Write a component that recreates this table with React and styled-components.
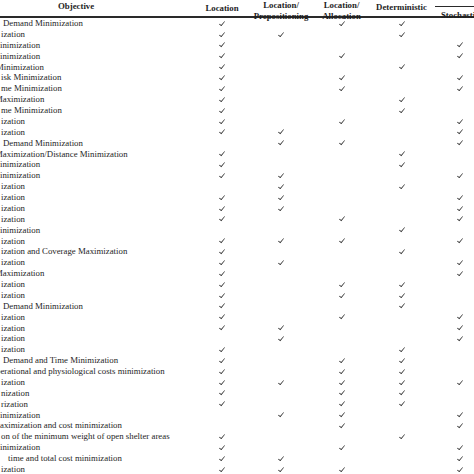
import { Fragment } from "react";
import styled, { createGlobalStyle } from "styled-components";

const GlobalStyle = createGlobalStyle`
  html, body {
    margin: 0;
    padding: 0;
    background: #fff;
  }
  body {
    font-family: "Liberation Serif", "Times New Roman", serif;
    color: #1e1e1e;
  }
`;

const Frame = styled.div`
  width: 474px;
  height: 474px;
  overflow: hidden;
  background: #fff;
`;

const Grid = styled.div`
  display: grid;
  grid-template-columns: 193px 58px 60px 61px 59px 58px;
  grid-template-rows: 18px;
  grid-auto-rows: 10.88px;
  width: 489px;
  font-size: 8.8px;
  line-height: 10.88px;
`;

const HeadCell = styled.div`
  box-sizing: border-box;
  height: 18px;
  border-bottom: 2px solid #2a2a2a;
  font-weight: bold;
  text-align: ${({ $left }) => ($left ? "left" : "center")};
  padding-top: ${({ $top }) => $top}px;
  padding-left: ${({ $indent }) => $indent || 0}px;
  line-height: 10.5px;
  white-space: nowrap;
  overflow: visible;
`;

const GroupRule = styled.div`
  margin: 6px 0 3px 4px;
  border-top: 1px solid #2a2a2a;
`;

const ObjCell = styled.div`
  white-space: nowrap;
  overflow: hidden;
  text-indent: ${({ $indent }) => $indent}px;
`;

const MarkCell = styled.div`
  display: flex;
  align-items: center;
  justify-content: center;
`;

const Check = () => (
  <svg width="6" height="5.5" viewBox="0 0 6 5.5">
    <path d="M0 3.3 L0.7 2.8 L2.1 3.9 L5.5 0.2 L6 0.6 L2.3 5.2 Z" fill="#2b2b2b" />
  </svg>
);

const cols = ["L", "P", "A", "D", "S"];

const rows = [
  ["Demand Minimization", "LAD", 3],
  ["ization", "LPD", 1],
  ["inimization", "LS", 0],
  ["inimization", "LAS", 0],
  ["Minimization", "LD", -4],
  ["isk Minimization", "LAS", 1],
  ["me Minimization", "LAS", 1],
  ["Maximization", "LD", -5],
  ["me Minimization", "LD", 1],
  ["ization", "LAS", 1],
  ["ization", "LPS", 1],
  ["Demand Minimization", "PAS", 3],
  ["Maximization/Distance Minimization", "LD", -5],
  ["inimization", "LD", 0],
  ["inimization", "LPS", 0],
  ["ization", "PD", 1],
  ["ization", "LPS", 1],
  ["ization", "LPS", 1],
  ["ization", "LAS", 1],
  ["inimization", "D", 0],
  ["ization", "LPAS", 1],
  ["ization and Coverage Maximization", "LD", 1],
  ["ization", "LPS", 1],
  ["Maximization", "LS", -5],
  ["ization", "LAD", 1],
  ["ization", "LAD", 1],
  ["Demand Minimization", "LD", 3],
  ["ization", "LAS", 1],
  ["ization", "LPS", 1],
  ["ization", "PS", 1],
  ["ization", "LD", 1],
  ["Demand and Time Minimization", "LAD", 3],
  ["perational and physiological costs minimization", "LAD", -4],
  ["ization", "LPADS", 1],
  ["nization", "LAD", 1],
  ["rization", "LAD", 1],
  ["inimization", "PAS", 0],
  ["aximization and cost minimization", "AS", 0],
  ["on of the minimum weight of open shelter areas", "LD", 1],
  ["inimization", "LAS", 0],
  ["time and total cost minimization", "LPS", 8],
  ["ization", "LPAS", 1],
];

export default function App() {
  return (
    <>
      <GlobalStyle />
      <Frame>
        <Grid>
          <HeadCell $left $indent={58} $top={1}>Objective</HeadCell>
          <HeadCell $top={2.5}>Location</HeadCell>
          <HeadCell $top={0}>
            Location/
            <br />
            Prepositioning
          </HeadCell>
          <HeadCell $top={0}>
            Location/
            <br />
            Allocation
          </HeadCell>
          <HeadCell $top={2}>Deterministic</HeadCell>
          <HeadCell $top={0}>
            <GroupRule />
            Stochastic
          </HeadCell>

          {rows.map(([text, marks, indent], i) => (
            <Fragment key={i}>
              <ObjCell $indent={indent}>{text}</ObjCell>
              {cols.map((c) => (
                <MarkCell key={c}>{marks.includes(c) ? <Check /> : null}</MarkCell>
              ))}
            </Fragment>
          ))}
        </Grid>
      </Frame>
    </>
  );
}
